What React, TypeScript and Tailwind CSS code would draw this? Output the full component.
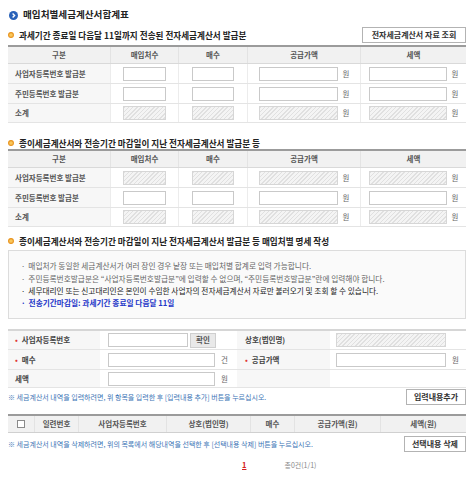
import React from "react";

const onBox = "h-[14px] border border-[#c9c9c9] bg-white";
const offBox =
  "h-[14px] border border-[#d6d6d6] bg-[repeating-linear-gradient(135deg,#e0e0e0_0px,#e0e0e0_1px,#f4f4f4_1px,#f4f4f4_3px)]";

function Field({ off, className }: { off?: boolean; className: string }) {
  return <input type="text" readOnly disabled={off} className={`${off ? offBox : onBox} ${className}`} />;
}

function Btn({ children, className }: { children: React.ReactNode; className: string }) {
  return (
    <button
      type="button"
      className={`h-[16px] border border-[#b3b3b3] bg-white text-[8px] font-bold leading-none text-[#333] ${className}`}
    >
      {children}
    </button>
  );
}

function Heading({ children }: { children: React.ReactNode }) {
  return (
    <div className="flex items-center gap-[5px] text-[8.6px] font-bold text-[#222]">
      <svg width="6" height="6" viewBox="0 0 6 6">
        <circle cx="3" cy="3" r="2.4" fill="#f9c75c" stroke="#e8921c" strokeWidth="1.1" />
      </svg>
      <span>{children}</span>
    </div>
  );
}

type Row = { label: string; off: boolean };

function SummaryTable({ rows }: { rows: Row[] }) {
  return (
    <div>
      <div className="flex h-[19px] border-t-2 border-b border-t-[#9b9b9b] border-b-[#d9d9d9] bg-[#f1f1f1] font-bold text-[#555]">
        <div className="flex w-[102px] items-center justify-center">구분</div>
        <div className="flex w-[68px] items-center justify-center border-l border-[#e3e3e3]">매입처수</div>
        <div className="flex w-[69px] items-center justify-center border-l border-[#e3e3e3]">매수</div>
        <div className="flex w-[113px] items-center justify-center border-l border-[#e3e3e3]">공급가액</div>
        <div className="flex w-[106px] items-center justify-center border-l border-[#e3e3e3]">세액</div>
      </div>
      {rows.map((r, i) => (
        <div
          key={r.label}
          className={`flex border-b border-[#e4e4e4] ${i === rows.length - 1 ? "h-[19px]" : "h-[20px]"}`}
        >
          <div className="flex w-[102px] items-center bg-[#f7f7f7] pl-[7px] font-bold text-[#555]">{r.label}</div>
          <div className="flex w-[68px] items-center justify-center border-l border-[#ececec]">
            <Field off={r.off} className="w-[43px]" />
          </div>
          <div className="flex w-[69px] items-center justify-center border-l border-[#ececec]">
            <Field off={r.off} className="w-[42px]" />
          </div>
          <div className="flex w-[113px] items-center justify-center gap-[5px] border-l border-[#ececec]">
            <Field off={r.off} className="w-[79px]" />
            <span className="text-[#666]">원</span>
          </div>
          <div className="flex w-[106px] items-center justify-center gap-[5px] border-l border-[#ececec]">
            <Field off={r.off} className="w-[78px]" />
            <span className="text-[#666]">원</span>
          </div>
        </div>
      ))}
    </div>
  );
}

function Req() {
  return <span className="mr-[4px] text-[#e03535]">•</span>;
}

export default function App() {
  return (
    <div className="w-[474px] bg-white px-2 pt-[8px] font-['Noto_Sans_CJK_KR',sans-serif] text-[7.5px] leading-none text-[#333]">
      {/* title */}
      <div className="flex h-[14px] items-center gap-[5px] pl-[1px] text-[9.6px] font-bold text-[#222]">
        <svg width="9" height="9" viewBox="0 0 9 9">
          <circle cx="4.5" cy="4.5" r="4.5" fill="#2a62b9" />
          <path d="M3.6 2.5 L5.6 4.5 L3.6 6.5" fill="none" stroke="#fff" strokeWidth="1.4" />
        </svg>
        <span>매입처별세금계산서합계표</span>
      </div>

      <div className="mt-[5px] flex h-[16px] items-center justify-between">
        <Heading>과세기간 종료일 다음달 11일까지 전송된 전자세금계산서 발급분</Heading>
        <Btn className="w-[104px]">전자세금계산서 자료 조회</Btn>
      </div>
      <div className="mt-[2px]">
        <SummaryTable
          rows={[
            { label: "사업자등록번호 발급분", off: false },
            { label: "주민등록번호 발급분", off: false },
            { label: "소계", off: true },
          ]}
        />
      </div>

      <div className="mt-[14px] flex h-[12px] items-center">
        <Heading>종이세금계산서와 전송기간 마감일이 지난 전자세금계산서 발급분 등</Heading>
      </div>
      <SummaryTable
        rows={[
          { label: "사업자등록번호 발급분", off: true },
          { label: "주민등록번호 발급분", off: false },
          { label: "소계", off: true },
        ]}
      />

      <div className="mt-[8px] flex h-[12px] items-center">
        <Heading>종이세금계산서와 전송기간 마감일이 지난 전자세금계산서 발급분 등 매입처별 명세 작성</Heading>
      </div>
      <div className="mt-[3px] h-[69px] border border-[#dcdcdc] bg-[#fafafa] pl-[12px] pt-[9px] text-[7.7px]">
        <div className="mb-[1px] flex h-[12px] items-center gap-[3px] text-[#666]">
          <span>·</span>
          <span>매입처가 동일한 세금계산서가 여러 장인 경우 낱장 또는 매입처별 합계로 입력 가능합니다.</span>
        </div>
        <div className="flex h-[12px] items-center gap-[3px] text-[#666]">
          <span>·</span>
          <span>주민등록번호발급분은 “사업자등록번호발급분”에 입력할 수 없으며, “주민등록번호발급분”란에 입력해야 합니다.</span>
        </div>
        <div className="flex h-[12px] items-center gap-[3px] text-[#222]">
          <span>·</span>
          <span>세무대리인 또는 신고대리인은 본인이 수임한 사업자의 전자세금계산서 자료만 불러오기 및 조회 할 수 있습니다.</span>
        </div>
        <div className="flex h-[12px] items-center gap-[3px] font-bold text-[#2436c8]">
          <span>·</span>
          <span>전송기간마감일: 과세기간 종료일 다음달 11일</span>
        </div>
      </div>

      {/* input form */}
      <div className="mt-[10px] border-t-2 border-[#d6d6d6]">
        <div className="flex h-[19px] border-b border-[#e4e4e4]">
          <div className="flex w-[92px] items-center bg-[#f7f7f7] pl-[7px] font-bold text-[#444]">
            <Req />
            사업자등록번호
          </div>
          <div className="flex w-[137px] items-center gap-[2px] pl-[8px]">
            <Field className="w-[80px]" />
            <button
              type="button"
              className="h-[15px] w-[26px] border border-[#cfcfcf] bg-[#e9e9e9] text-[7.5px] font-bold text-[#555]"
            >
              확인
            </button>
          </div>
          <div className="flex w-[93px] items-center bg-[#f7f7f7] pl-[8px] font-bold text-[#444]">상호(법인명)</div>
          <div className="flex w-[136px] items-center pl-[6px]">
            <Field off className="w-[110px]" />
          </div>
        </div>
        <div className="flex h-[20px] border-b border-[#e4e4e4]">
          <div className="flex w-[92px] items-center bg-[#f7f7f7] pl-[7px] font-bold text-[#444]">
            <Req />
            매수
          </div>
          <div className="flex w-[137px] items-center gap-[6px] pl-[8px]">
            <Field className="w-[107px]" />
            <span className="text-[#666]">건</span>
          </div>
          <div className="flex w-[93px] items-center bg-[#f7f7f7] pl-[8px] font-bold text-[#444]">
            <Req />
            공급가액
          </div>
          <div className="flex w-[136px] items-center gap-[6px] pl-[6px]">
            <Field className="w-[110px]" />
            <span className="text-[#666]">원</span>
          </div>
        </div>
        <div className="flex h-[18px] border-b border-[#e4e4e4]">
          <div className="flex w-[92px] items-center bg-[#f7f7f7] pl-[7px] font-bold text-[#444]">세액</div>
          <div className="flex w-[137px] items-center gap-[6px] pl-[8px]">
            <Field className="w-[107px]" />
            <span className="text-[#666]">원</span>
          </div>
          <div className="w-[93px] bg-[#f7f7f7]" />
          <div className="w-[136px]" />
        </div>
      </div>

      <div className="flex h-[18px] items-center justify-between">
        <span className="text-[7px] text-[#3d75b6]">
          ※ 세금계산서 내역을 입력하려면, 위 항목을 입력한 후 [입력내용 추가] 버튼을 누르십시오.
        </span>
        <Btn className="w-[60px]">입력내용추가</Btn>
      </div>

      {/* list */}
      <div className="mt-[8px] flex h-[19px] border-t-2 border-b border-t-[#9b9b9b] border-b-[#d0d0d0] bg-[#f1f1f1] font-bold text-[#555]">
        <div className="flex w-[26px] items-center justify-center">
          <span className="h-[8px] w-[8px] border border-[#8a8a8a] bg-white" />
        </div>
        <div className="flex w-[44px] items-center justify-center border-l border-[#e3e3e3]">일련번호</div>
        <div className="flex w-[88px] items-center justify-center border-l border-[#e3e3e3]">사업자등록번호</div>
        <div className="flex w-[84px] items-center justify-center border-l border-[#e3e3e3]">상호(법인명)</div>
        <div className="flex w-[44px] items-center justify-center border-l border-[#e3e3e3]">매수</div>
        <div className="flex w-[86px] items-center justify-center border-l border-[#e3e3e3]">공급가액(원)</div>
        <div className="flex w-[86px] items-center justify-center border-l border-[#e3e3e3]">세액(원)</div>
      </div>

      <div className="mt-[2px] flex h-[18px] items-center justify-between">
        <span className="text-[7px] text-[#3d75b6]">
          ※ 세금계산서 내역을 삭제하려면, 위의 목록에서 해당내역을 선택한 후 [선택내용 삭제] 버튼을 누르십시오.
        </span>
        <Btn className="w-[62px]">선택내용 삭제</Btn>
      </div>

      <div className="mt-[6px] flex h-[12px] items-center gap-[38px] pl-[234px]">
        <span className="font-bold text-[#d42020] underline">1</span>
        <span className="text-[7px] text-[#888]">총0건(1/1)</span>
      </div>
    </div>
  );
}
